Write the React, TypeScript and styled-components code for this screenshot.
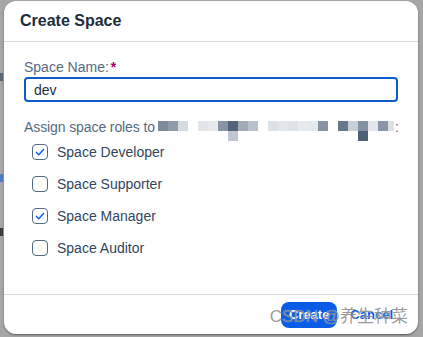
import styled, { createGlobalStyle } from 'styled-components';

const GlobalStyle = createGlobalStyle`
  html, body {
    margin: 0;
    padding: 0;
    background: #a6a6a6;
  }
  body {
    font-family: "Liberation Sans", Arial, sans-serif;
  }
`;

const Backdrop = styled.div`
  position: relative;
  width: 423px;
  height: 337px;
  box-sizing: border-box;
  padding: 1px 5px 3px 4px;
  display: flex;
  background: #a6a6a6;
  overflow: hidden;
`;

const Peek = styled.span<{ $top: number; $color: string }>`
  position: absolute;
  left: 0;
  top: ${({ $top }) => $top}px;
  width: 3px;
  height: 8px;
  background: ${({ $color }) => $color};
  opacity: 0.8;
`;

const Dialog = styled.div`
  position: relative;
  flex: 1;
  display: flex;
  flex-direction: column;
  background: #fff;
  border-radius: 12px;
  box-shadow: 0 1px 2px rgba(0, 0, 0, 0.45);
  overflow: hidden;
`;

const Header = styled.header`
  height: 40px;
  display: flex;
  align-items: center;
  padding: 0 16px;
  border-bottom: 1px solid #d9d9d9;
`;

const Title = styled.h1`
  margin: 0;
  font-size: 16px;
  font-weight: 700;
  color: #1d2d3e;
`;

const Body = styled.div`
  flex: 1;
  padding: 16px 20px 0 20px;
  display: flex;
  flex-direction: column;
`;

const Label = styled.label`
  font-size: 14px;
  line-height: 18px;
  color: #556b82;
  display: flex;
  align-items: flex-start;
  height: 18px;
  white-space: nowrap;
`;

const Required = styled.span`
  color: #aa0066;
  font-weight: 700;
  margin-left: 2px;
`;

const NameInput = styled.input`
  margin-top: 1px;
  height: 25px;
  box-sizing: border-box;
  border: 2px solid #0a5ccf;
  border-radius: 4px;
  padding: 0 8px;
  font-family: inherit;
  font-size: 14px;
  color: #1d2d3e;
  outline: none;
`;

const AssignLine = styled(Label)`
  margin-top: 16px;
  letter-spacing: -0.1px;
`;

const Mosaic = styled.svg`
  margin: 3px 1px 0 3px;
  flex: none;
`;

const RoleList = styled.div`
  display: flex;
  flex-direction: column;
  padding-left: 8px;
`;

const Role = styled.label`
  height: 32px;
  display: flex;
  align-items: center;
  gap: 9px;
  font-size: 14px;
  color: #32465c;
`;

const Box = styled.span`
  width: 16px;
  height: 16px;
  box-sizing: border-box;
  border: 1px solid #556b82;
  border-radius: 4px;
  background: #fff;
  display: flex;
  align-items: center;
  justify-content: center;
`;

const Footer = styled.footer`
  height: 39px;
  border-top: 1px solid #d9d9d9;
  display: flex;
  align-items: center;
  justify-content: flex-end;
  gap: 5px;
  padding-right: 17px;
`;

const Button = styled.button<{ $primary?: boolean }>`
  height: 26px;
  padding: 0 8px;
  border: none;
  border-radius: 8px;
  font-family: inherit;
  font-size: 13px;
  font-weight: 700;
  background: ${({ $primary }) => ($primary ? '#0a5ce6' : 'transparent')};
  color: ${({ $primary }) => ($primary ? '#fff' : '#0a5ce6')};
`;

const Watermark = styled.div`
  position: absolute;
  right: 10px;
  bottom: 7px;
  font-family: "Liberation Sans", "Noto Sans CJK SC", sans-serif;
  font-size: 17px;
  color: rgba(120, 120, 120, 0.75);
  text-shadow: 0 0 1px rgba(255, 255, 255, 0.6);
  white-space: nowrap;
  pointer-events: none;
`;

const cells: [number, number, string][] = [
  [0, 0, '#7f8b9b'], [10, 0, '#8f9aa8'], [20, 0, '#d5dae0'],
  [40, 0, '#e2e5e9'], [50, 0, '#e8ebee'], [60, 0, '#8794a5'],
  [70, 0, '#536479'], [80, 0, '#a2acb8'], [90, 0, '#b9c1cb'],
  [110, 0, '#dde1e6'], [120, 0, '#e3e6ea'], [130, 0, '#dfe3e8'],
  [140, 0, '#e8ebee'], [150, 0, '#e5e8ec'], [160, 0, '#8794a5'],
  [180, 0, '#67788d'], [190, 0, '#c9cfd6'], [200, 0, '#8492a3'],
  [210, 0, '#e3e6ea'], [220, 0, '#8896a7'], [230, 0, '#dde1e6'],
  [70, 10, '#bfc6cf'], [200, 10, '#4e5f76'],
];

const Check = () => (
  <svg width="10" height="8" viewBox="0 0 10 8">
    <polyline points="1,4 3.8,6.8 9,1" fill="none" stroke="#0a5ce6" strokeWidth="1.4" />
  </svg>
);

const roles = [
  { name: 'Space Developer', checked: true },
  { name: 'Space Supporter', checked: false },
  { name: 'Space Manager', checked: true },
  { name: 'Space Auditor', checked: false },
];

const App = () => (
  <>
    <GlobalStyle />
    <Backdrop>
      <Peek $top={73} $color="#4a5668" />
      <Peek $top={174} $color="#3a6fd0" />
      <Peek $top={228} $color="#222" />
      <Dialog>
        <Header>
          <Title>Create Space</Title>
        </Header>
        <Body>
          <Label>
            Space Name:<Required>*</Required>
          </Label>
          <NameInput defaultValue="dev" />
          <AssignLine>
            Assign space roles to
            <Mosaic width="236" height="20" viewBox="0 0 236 20">
              {cells.map(([x, y, c]) => (
                <rect key={`${x}-${y}`} x={x} y={y} width={x === 230 ? 6 : 10} height="10" fill={c} />
              ))}
            </Mosaic>
            :
          </AssignLine>
          <RoleList>
            {roles.map((r) => (
              <Role key={r.name}>
                <Box>{r.checked && <Check />}</Box>
                {r.name}
              </Role>
            ))}
          </RoleList>
        </Body>
        <Footer>
          <Button $primary>Create</Button>
          <Button>Cancel</Button>
        </Footer>
        <Watermark>CSDN @养生种菜</Watermark>
      </Dialog>
    </Backdrop>
  </>
);

export default App;
